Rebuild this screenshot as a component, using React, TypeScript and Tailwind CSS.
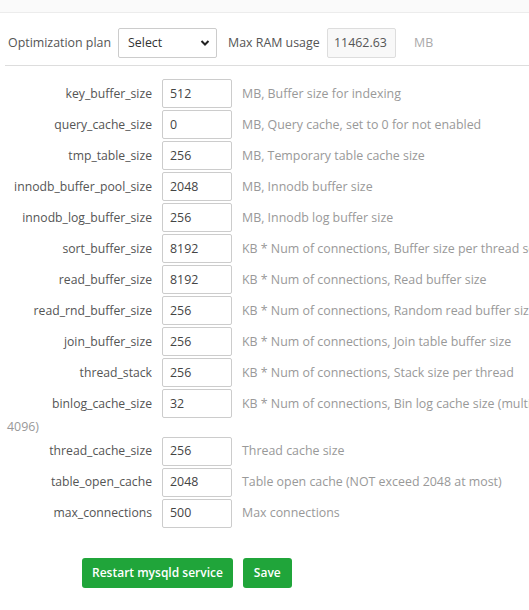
import React from "react";

const rows: { name: string; value: string; desc: React.ReactNode }[] = [
  { name: "key_buffer_size", value: "512", desc: "MB, Buffer size for indexing" },
  { name: "query_cache_size", value: "0", desc: "MB, Query cache, set to 0 for not enabled" },
  { name: "tmp_table_size", value: "256", desc: "MB, Temporary table cache size" },
  { name: "innodb_buffer_pool_size", value: "2048", desc: "MB, Innodb buffer size" },
  { name: "innodb_log_buffer_size", value: "256", desc: "MB, Innodb log buffer size" },
  { name: "sort_buffer_size", value: "8192", desc: "KB * Num of connections, Buffer size per thread sort" },
  { name: "read_buffer_size", value: "8192", desc: "KB * Num of connections, Read buffer size" },
  { name: "read_rnd_buffer_size", value: "256", desc: "KB * Num of connections, Random read buffer size" },
  { name: "join_buffer_size", value: "256", desc: "KB * Num of connections, Join table buffer size" },
  { name: "thread_stack", value: "256", desc: "KB * Num of connections, Stack size per thread" },
  {
    name: "binlog_cache_size",
    value: "32",
    desc: (
      <>
        KB * Num of connections, Bin log cache size (multiple of
        <br />
        4096)
      </>
    ),
  },
  { name: "thread_cache_size", value: "256", desc: "Thread cache size" },
  { name: "table_open_cache", value: "2048", desc: "Table open cache (NOT exceed 2048 at most)" },
  { name: "max_connections", value: "500", desc: "Max connections" },
];

export default function App() {
  return (
    <div
      className="w-[529px] h-[610px] overflow-hidden bg-white text-[12.4px] text-[#555]"
      style={{ fontFamily: '"Open Sans", "Noto Sans", sans-serif' }}
    >
      <div className="h-[13px] bg-[#fafafa] border-b border-[#ececec]" />
      <div className="w-[640px] pl-[8px] pt-[15px] flex items-center">
        <span className="w-[110px] shrink-0 whitespace-nowrap">Optimization plan</span>
        <div className="w-[99px] shrink-0 h-[30px] border border-[#ccc] rounded-[2px] flex items-center justify-between pl-[9px] pr-[6px]">
          <span className="text-[#333]">Select</span>
          <svg width="10" height="10" viewBox="0 0 10 10">
            <path d="M1.5 3 L5 6.5 L8.5 3" fill="none" stroke="#222" strokeWidth="2" />
          </svg>
        </div>
        <span className="w-[110px] shrink-0 pl-[11px] whitespace-nowrap">Max RAM usage</span>
        <div className="w-[69px] shrink-0 h-[30px] border border-[#ddd] rounded-[2px] bg-[#f8f8f8] flex items-center pl-[6px] text-[#555]">
          11462.63
        </div>
        <span className="ml-[18px] text-[#aaa]">MB</span>
      </div>
      <div className="ml-[5px] w-[640px] mt-[7px] border-t border-[#ddd]" />
      <div className="w-[640px] pl-[7px] pt-[13px]">
        {rows.map((r) => (
          <div key={r.name} className="mb-[2px] leading-[16px] whitespace-nowrap">
            <span className="inline-block w-[145px] text-right mr-[10px] align-middle text-[12.2px]">{r.name}</span>
            <span className="inline-flex items-center w-[70px] h-[29px] border border-[#ccc] rounded-[2px] pl-[7px] align-middle text-[#444]">
              {r.value}
            </span>
            <span className="ml-[10px] align-middle text-[#999]">{r.desc}</span>
          </div>
        ))}
        <div className="flex gap-[10px] mt-[30px] ml-[75px]">
          <button className="h-[30px] px-[10px] rounded-[3px] bg-[#20a53a] text-white font-semibold text-[12px]">
            Restart mysqld service
          </button>
          <button className="h-[30px] px-[11px] rounded-[3px] bg-[#20a53a] text-white font-semibold text-[12px]">
            Save
          </button>
        </div>
      </div>
    </div>
  );
}
